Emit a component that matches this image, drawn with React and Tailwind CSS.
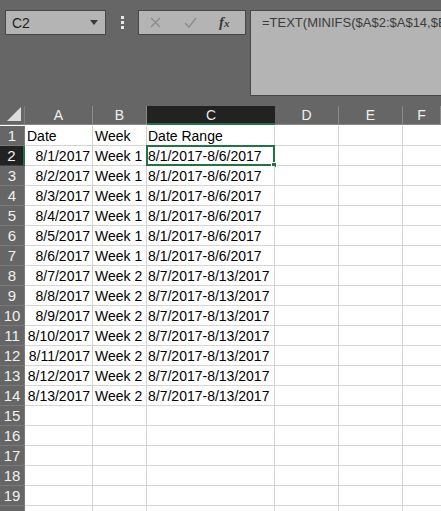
import React from 'react';

const cols = ['A', 'B', 'C', 'D', 'E', 'F'];

const data = [
  ['Date', 'Week', 'Date Range'],
  ['8/1/2017', 'Week 1', '8/1/2017-8/6/2017'],
  ['8/2/2017', 'Week 1', '8/1/2017-8/6/2017'],
  ['8/3/2017', 'Week 1', '8/1/2017-8/6/2017'],
  ['8/4/2017', 'Week 1', '8/1/2017-8/6/2017'],
  ['8/5/2017', 'Week 1', '8/1/2017-8/6/2017'],
  ['8/6/2017', 'Week 1', '8/1/2017-8/6/2017'],
  ['8/7/2017', 'Week 2', '8/7/2017-8/13/2017'],
  ['8/8/2017', 'Week 2', '8/7/2017-8/13/2017'],
  ['8/9/2017', 'Week 2', '8/7/2017-8/13/2017'],
  ['8/10/2017', 'Week 2', '8/7/2017-8/13/2017'],
  ['8/11/2017', 'Week 2', '8/7/2017-8/13/2017'],
  ['8/12/2017', 'Week 2', '8/7/2017-8/13/2017'],
  ['8/13/2017', 'Week 2', '8/7/2017-8/13/2017'],
];

const rows = Array.from({ length: 20 }, (_, i) => i + 1);

const Toolbar = () => (
  <div className="flex items-start h-[106px] bg-[#666666] pt-[10px]">
    <div className="ml-[5px] w-[101px] h-[25px] bg-[#b4b4b4] border border-[#474747] flex items-center justify-between pl-[6px] pr-[7px] text-[14px] text-[#1e1e1e]">
      <span>C2</span>
      <svg width="8" height="5" viewBox="0 0 8 5"><path d="M0 0h8L4 5z" fill="#3a3a3a" /></svg>
    </div>
    <div className="w-[32px] h-[25px] flex flex-col items-center justify-center gap-[2px]">
      <span className="w-[3px] h-[3px] bg-[#e8e8e8]" />
      <span className="w-[3px] h-[3px] bg-[#e8e8e8]" />
      <span className="w-[3px] h-[3px] bg-[#e8e8e8]" />
    </div>
    <div className="w-[108px] h-[25px] bg-[#b4b4b4] border border-[#474747] flex items-center">
      <svg className="ml-[11px]" width="11" height="11" viewBox="0 0 11 11"><path d="M1 1l9 9M10 1l-9 9" stroke="#8c8c8c" strokeWidth="1.4" /></svg>
      <svg className="ml-[23px]" width="13" height="11" viewBox="0 0 13 11"><path d="M1 6l4 4 7-9" stroke="#8c8c8c" strokeWidth="1.4" fill="none" /></svg>
      <span className="ml-[22px] italic font-bold text-[15px] text-[#3a3a3a] font-['Liberation_Serif',serif] leading-none">f<span className="text-[11px]">x</span></span>
    </div>
    <div className="ml-[4px] flex-1 h-[86px] bg-[#b4b4b4] border border-[#474747] border-r-0 pl-[11px] pt-[5px] text-[13px] text-[#3c3c3c] whitespace-nowrap overflow-hidden">
      =TEXT(MINIFS($A$2:$A$14,$B$2:$B$14,B2),"m/d/yyyy")
    </div>
  </div>
);

const Grid = () => (
  <div className="grid grid-cols-[25px_68px_54px_128px_64px_64px_1fr] auto-rows-[20px]">
    <div className="h-[19px] bg-[#666666] border-r border-b border-[#7d7d7d] flex items-end justify-end pr-[3px] pb-[3px]">
      <svg width="14" height="14" viewBox="0 0 14 14"><path d="M14 0V14H0z" fill="#dcdcdc" /></svg>
    </div>
    {cols.map((c) => (
      <div
        key={c}
        className={
          c === 'C'
            ? 'h-[19px] bg-[#222222] border-b-2 border-[#217346] text-[#e6e6e6] flex items-center justify-center'
            : 'h-[19px] bg-[#666666] border-r border-b border-[#8a8a8a] text-[#f0f0f0] flex items-center justify-center'
        }
      >
        {c}
      </div>
    ))}
    {rows.map((r) => {
      const d = data[r - 1] || ['', '', ''];
      const sel = r === 2;
      return (
        <React.Fragment key={r}>
          <div
            className={
              sel
                ? 'bg-[#222222] border-r-2 border-b border-r-[#217346] border-b-[#444] text-[15px] text-[#f0f0f0] flex items-center justify-center'
                : 'bg-[#666666] border-r border-b border-[#7a7a7a] text-[15px] text-[#f0f0f0] flex items-center justify-center'
            }
          >
            {r < 20 ? r : ''}
          </div>
          <div className="bg-white border-r border-b border-[#d4d4d4] flex items-center px-[2px] justify-end text-black whitespace-nowrap">
            {r === 1 ? <span className="mr-auto">{d[0]}</span> : d[0]}
          </div>
          <div className="bg-white border-r border-b border-[#d4d4d4] flex items-center px-[2px] text-black whitespace-nowrap">
            {d[1]}
          </div>
          <div className="relative bg-white border-r border-b border-[#d4d4d4] flex items-center px-[1px] text-black whitespace-nowrap">
            {d[2]}
            {sel && (
              <>
                <span className="absolute -left-[1px] -top-[1px] -right-[1px] -bottom-[1px] border-2 border-[#217346]" />
                <span className="absolute -right-[3px] -bottom-[3px] w-[6px] h-[6px] bg-[#217346] border border-white" />
              </>
            )}
          </div>
          <div className="bg-white border-r border-b border-[#d4d4d4]" />
          <div className="bg-white border-r border-b border-[#d4d4d4]" />
          <div className="bg-white border-b border-[#d4d4d4]" />
        </React.Fragment>
      );
    })}
  </div>
);

export default function App() {
  return (
    <div className="w-[441px] h-[511px] overflow-hidden bg-white font-['Liberation_Sans',Arial,sans-serif] text-[14px] leading-none">
      <Toolbar />
      <Grid />
    </div>
  );
}
